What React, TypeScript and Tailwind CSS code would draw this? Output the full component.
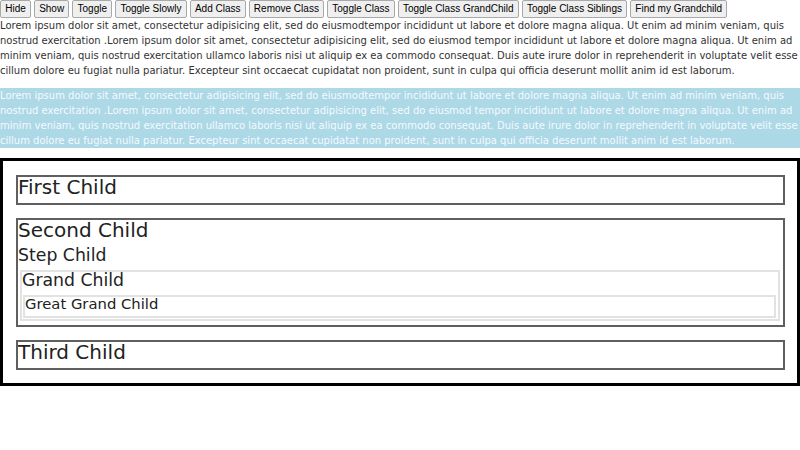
import React from "react";

const buttons = [
    "Hide",
    "Show",
    "Toggle",
    "Toggle Slowly",
    "Add Class",
    "Remove Class",
    "Toggle Class",
    "Toggle Class GrandChild",
    "Toggle Class Siblings",
    "Find my Grandchild",
];

const lorem =
    "Lorem ipsum dolor sit amet, consectetur adipisicing elit, sed do eiusmodtempor incididunt ut labore et dolore magna aliqua. Ut enim ad minim veniam, quis nostrud exercitation .Lorem ipsum dolor sit amet, consectetur adipisicing elit, sed do eiusmod tempor incididunt ut labore et dolore magna aliqua. Ut enim ad minim veniam, quis nostrud exercitation ullamco laboris nisi ut aliquip ex ea commodo consequat. Duis aute irure dolor in reprehenderit in voluptate velit esse cillum dolore eu fugiat nulla pariatur. Excepteur sint occaecat cupidatat non proident, sunt in culpa qui officia deserunt mollit anim id est laborum.";

export default function App() {
    return (
        <div className="bg-white min-h-[450px] font-['DejaVu_Sans',sans-serif] text-[10px] leading-[15px] text-[#333]">
            <div className="flex gap-[3px] h-[18px]">
                {buttons.map((label) => (
                    <button
                        key={label}
                        className="h-[18px] px-[4.2px] border border-[#a9a9a9] rounded-[2px] bg-[#efefef] text-black font-['Liberation_Sans',Arial,sans-serif] text-[10px] leading-none whitespace-nowrap"
                    >
                        {label}
                    </button>
                ))}
            </div>

            <p>{lorem}</p>

            <p className="mt-[10px] bg-[#add8e6] text-[#f4faff]">{lorem}</p>

            <div className="mt-[10px] border-[3px] border-black pt-[14px] pb-[13px] pl-[13px] pr-[12px] flex flex-col gap-[13px] text-[#222]">
                <div className="h-[30px] border-2 border-[#5f5f5f] text-[20px] leading-[20px]">
                    First Child
                </div>

                <div className="h-[109px] border-2 border-[#5f5f5f]">
                    <div className="h-[26px] text-[20px] leading-[20px]">Second Child</div>
                    <div className="h-[24px] text-[17.3px] leading-[18px]">Step Child</div>
                    <div className="ml-[2px] mr-[3px] h-[51px] border-2 border-[#e2e2e2]">
                        <div className="h-[23px] text-[17.3px] leading-[17px]">Grand Child</div>
                        <div className="ml-[1px] mr-[2px] h-[23px] border-2 border-[#e2e2e2] text-[14.8px] leading-[14px]">
                            Great Grand Child
                        </div>
                    </div>
                </div>

                <div className="h-[30px] border-2 border-[#5f5f5f] text-[20px] leading-[20px]">
                    Third Child
                </div>
            </div>
        </div>
    );
}
